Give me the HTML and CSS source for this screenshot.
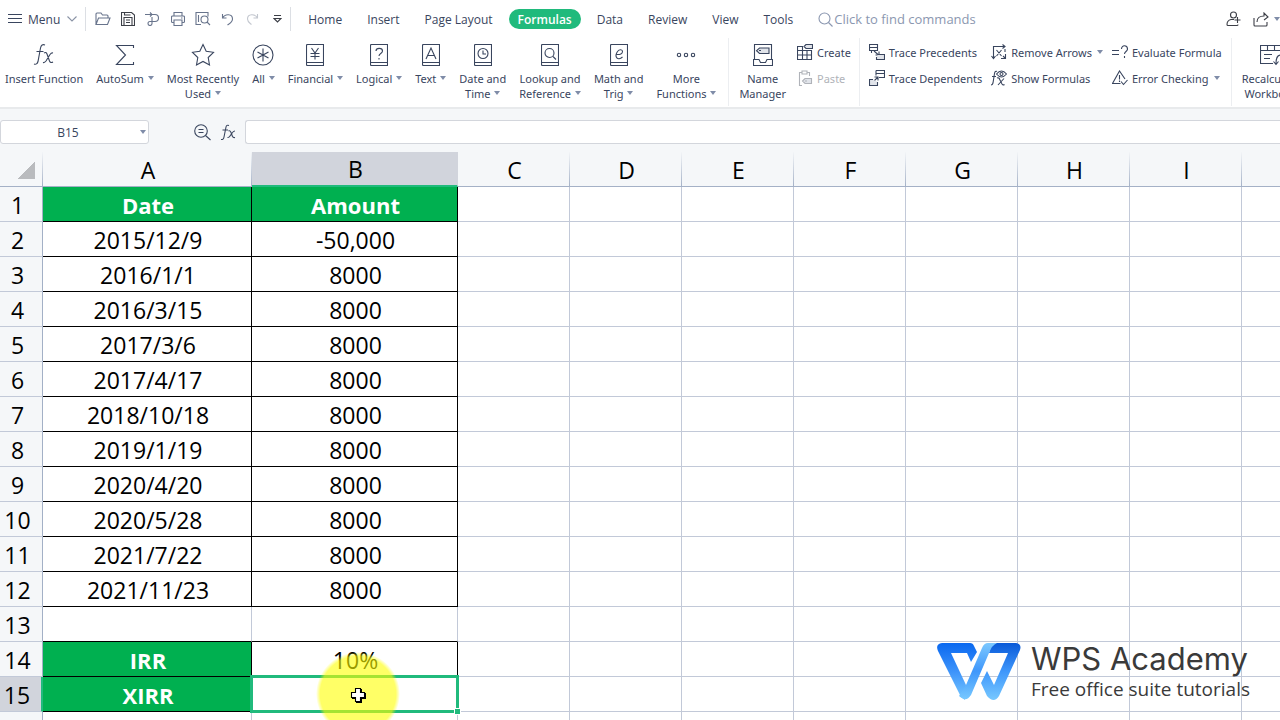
FILE: index.html
```html
<!DOCTYPE html>
<html lang="en">
<head>
    <meta charset="UTF-8" />
    <meta name="viewport" content="width=device-width, initial-scale=1" />
    <title>Spreadsheet</title>
    <link rel="stylesheet" href="styles.css">
</head>
<body>
<header>
    <div class="topbar">
        <button class="menu-btn">
            <svg width="14" height="10" viewBox="0 0 14 10"><path d="M0 .5h14M0 4.5h14M0 8.5h14"/></svg>
            Menu
            <svg class="soft" width="10" height="6" viewBox="0 0 10 6"><path d="M.5.5 5 5 9.5.5"/></svg>
        </button>
        <div class="quick">
            <button aria-label="Open"><svg width="16" height="14" viewBox="0 0 16 14"><path d="M1 12.500V2q0-1 1-1h4l1.500 2H12q1 0 1 1v1.500M1 12.500 3.500 6h11.500l-2.500 6.500z"/></svg></button>
            <button class="dark" aria-label="Save"><svg width="14" height="14" viewBox="0 0 14 14"><path d="M.5.5h10l3 2.500v10.500H.5zM3 13V5.500h8V13M3.500.5V3h6M5 8h4M5 10.500h4"/></svg></button>
            <button aria-label="Export"><svg width="15" height="14" viewBox="0 0 15 14"><path d="M3 2.500h7a3.500 3.500 0 0 1 0 7H5a2 2 0 1 0 2 2V5M0 2.500h5M5 .5l2 2-2 2"/></svg></button>
            <button aria-label="Print"><svg width="14" height="14" viewBox="0 0 14 14"><path d="M3 4V.5h8V4M3 10.500H1.500q-1 0-1-1V5q0-1 1-1h11q1 0 1 1v4.500q0 1-1 1H11M3 8h8v5.500H3zM10 6h1.500"/></svg></button>
            <button aria-label="Print preview"><svg width="16" height="14" viewBox="0 0 16 14"><path d="M6 12.500H1V.5h12v4M3.500 3v7"/><circle cx="9.500" cy="7.500" r="3.500"/><path d="m12 10 3 3"/></svg></button>
            <button aria-label="Undo"><svg width="13" height="14" viewBox="0 0 13 14"><path d="M1.500 2v4h4M1.500 6C4 1.500 11.500 1.500 11.500 7c0 3-2 4-5 6"/></svg></button>
            <button class="faint" aria-label="Redo"><svg width="13" height="14" viewBox="0 0 13 14"><path d="M11.500 2v4h-4M11.500 6C9 1.500 1.500 1.500 1.500 7c0 3 2 4 4 5.500"/></svg></button>
            <button class="dark" aria-label="Customize"><svg width="9" height="8" viewBox="0 0 9 8"><path d="M1 .5h7M1 3.500l3.500 3.500L8 3.500z"/></svg></button>
        </div>
        <nav class="tabs">
            <button>Home</button>
            <button>Insert</button>
            <button>Page Layout</button>
            <button class="active">Formulas</button>
            <button>Data</button>
            <button>Review</button>
            <button>View</button>
            <button>Tools</button>
        </nav>
        <label class="search">
            <svg width="15" height="15" viewBox="0 0 15 15"><circle cx="6.500" cy="6.500" r="5.500"/><path d="m10.500 10.500 4 4"/></svg>
            <input type="text" placeholder="Click to find commands" aria-label="Find commands">
        </label>
        <div class="account">
            <button class="dark" aria-label="Add user"><svg width="15" height="16" viewBox="0 0 15 16"><circle cx="7.500" cy="4" r="3"/><path d="M8 8.500H5q-4 1-4 5 0 1 1 1h9q1 0 1-1M11.500 6v6M8.500 9h6"/></svg></button>
            <button class="dark" aria-label="Share"><svg width="16" height="15" viewBox="0 0 16 15"><path d="M1 6v7q0 1 1 1h11q1 0 1-1v-3M4 10c0-4 3-6 7-6V1l4 4-4 3"/></svg><span class="caret"></span></button>
        </div>
    </div>

    <svg class="defs" width="0" height="0">
        <symbol id="book" viewBox="0 0 18 22"><path d="M1.500.5h16v21h-16q-1 0-1-1v-19q0-1 1-1zM.5 18.500h17"/></symbol>
    </svg>

    <div class="ribbon">
        <div class="group functions">
            <button class="big">
                <svg width="22" height="24" viewBox="0 0 22 24"><path d="M12 2q-3.500-1.500-4.500 3L5 18.500Q4 22 1 21M3.500 8.500h7M11 10q2-1.500 3 1l2.500 7q1 2.500 3.500 1M20 10q-1.500-.5-3 1.500L13 18q-1.500 2-3 1.500"/></svg>
                <span>Insert Function</span>
            </button>
            <button class="big">
                <svg width="20" height="24" viewBox="0 0 20 24"><path d="M18.500 5V2.500h-17l9 9.500-9 9.500h17V19"/></svg>
                <span>AutoSum <i class="caret"></i></span>
            </button>
            <button class="big">
                <svg width="24" height="24" viewBox="0 0 24 24"><path d="m12 1.500 3.200 6.800 7.300 1-5.300 5.200 1.300 7.500-6.500-3.600L5.500 22l1.300-7.500L1.500 9.300l7.300-1z"/></svg>
                <span>Most Recently<br>Used <i class="caret"></i></span>
            </button>
            <button class="big">
                <svg width="22" height="24" viewBox="0 0 22 24"><circle cx="11" cy="12" r="10"/><path d="M11 5.500v13M5.500 9l11 6M16.500 9l-11 6"/></svg>
                <span>All <i class="caret"></i></span>
            </button>
            <button class="big">
                <svg width="18" height="24" viewBox="0 0 18 24"><use href="#book" y="1" width="18" height="22"/><path d="m5.500 5 3.500 5 3.500-5M4.500 10.500h9M4.500 13.500h9M9 10v6.500"/></svg>
                <span>Financial <i class="caret"></i></span>
            </button>
            <button class="big">
                <svg width="18" height="24" viewBox="0 0 18 24"><use href="#book" y="1" width="18" height="22"/><path d="M6 8c0-3.500 6.500-3.500 6.500 0 0 2.500-3.500 2.500-3.500 5M9 15v1.500"/></svg>
                <span>Logical <i class="caret"></i></span>
            </button>
            <button class="big">
                <svg width="18" height="24" viewBox="0 0 18 24"><use href="#book" y="1" width="18" height="22"/><path d="M4 16 9 5l5 11M6 12.500h6"/></svg>
                <span>Text <i class="caret"></i></span>
            </button>
            <button class="big">
                <svg width="18" height="24" viewBox="0 0 18 24"><use href="#book" y="1" width="18" height="22"/><circle cx="9" cy="10.500" r="5"/><path d="M9 7.500v3.500h3"/></svg>
                <span>Date and<br>Time <i class="caret"></i></span>
            </button>
            <button class="big">
                <svg width="18" height="24" viewBox="0 0 18 24"><use href="#book" y="1" width="18" height="22"/><circle cx="8.500" cy="10" r="4.500"/><path d="m12 13.500 3 3"/></svg>
                <span>Lookup and<br>Reference <i class="caret"></i></span>
            </button>
            <button class="big">
                <svg width="18" height="24" viewBox="0 0 18 24"><use href="#book" y="1" width="18" height="22"/><path d="M6 11.500q6.500.5 6.500-3c0-2-3-2.500-5 0-3.500 5 0 10 5 5.500"/></svg>
                <span>Math and<br>Trig <i class="caret"></i></span>
            </button>
            <button class="big">
                <svg width="20" height="24" viewBox="0 0 20 24"><circle cx="3" cy="12" r="1.700"/><circle cx="10" cy="12" r="1.700"/><circle cx="17" cy="12" r="1.700"/></svg>
                <span>More<br>Functions <i class="caret"></i></span>
            </button>
        </div>

        <div class="group names">
            <button class="big">
                <svg width="20" height="24" viewBox="0 0 20 24"><path d="M1.500 16.500v-15h17v15M.5 16.500h5.500l1.500 3h5l1.500-3h5.500v6H.5z"/><path class="fill" d="M6.500 5h9.500v5.500H6.500L3.500 7.700z"/><path d="M6 7.500h2"/></svg>
                <span>Name<br>Manager</span>
            </button>
            <div class="stack">
                <button class="small">
                    <svg width="16" height="16" viewBox="0 0 16 16"><path d="M6 2.500H.5v13h14V6M.5 6.500h14M.5 11h14M5.500 2.500v13M10 6.500v9"/><path class="fill" d="M9 .5h6.500v4H9l-2-2z"/></svg>
                    Create
                </button>
                <button class="small" disabled>
                    <svg width="16" height="16" viewBox="0 0 16 16"><path d="M5 15.500H2.500V2.500H5M10 2.500h2.500V6M5 1h5v3H5z"/><path class="fill" d="M8 8.500h6.500v5H8L5.500 11z"/><path d="M8 11h2"/></svg>
                    Paste
                </button>
            </div>
        </div>

        <div class="group audit">
            <div class="stack">
                <button class="small">
                    <svg width="16" height="16" viewBox="0 0 16 16"><path d="M.5.5h8v6h-8zM.5 3.500h8M2.500 6.500V9M5 7l4.500 4M6.500 11H10V7.500"/><path class="fill" d="M9 10.500h6.500v5H7.500V13"/></svg>
                    Trace Precedents
                </button>
                <button class="small">
                    <svg width="16" height="16" viewBox="0 0 16 16"><path d="M7 .5h8.500v7H10M7 .5v5M7 3.500h8.500M4 12l5-5M5.500 7H9v3.500"/><path class="fill" d="M4 9.500H.5v6h8V12"/></svg>
                    Trace Dependents
                </button>
            </div>
            <div class="stack">
                <button class="small">
                    <svg width="16" height="16" viewBox="0 0 16 16"><path d="M2.500 14V2.500H14M11.500.5l2.500 2-2.500 2M.5 12l2 2.500 2-2.500M5.500 6l5 6M10.500 6l-5 6M14 5v3M10 14.500h4.500V10M12 12l2.500 2.500"/></svg>
                    Remove Arrows <i class="caret"></i>
                </button>
                <button class="small">
                    <svg width="16" height="16" viewBox="0 0 16 16"><path d="M6 1.500q-2-1-2.500 2L2 13q-.5 2-2 2M1 6.500h4M6 8q2-1 3 2l2 4q1 1.500 2.500.5M13 8.500 7 15M5.500 4q5-6 10 0-5 6-10 0z"/><circle cx="10.500" cy="4" r="1.500"/></svg>
                    Show Formulas
                </button>
            </div>
            <div class="stack">
                <button class="small">
                    <svg width="16" height="16" viewBox="0 0 16 16"><path d="M0 6.500h7M0 10.500h7M9.500 5c0-4.500 6-4 6 0 0 2.500-3 2.500-3 5M12.500 12v2"/></svg>
                    Evaluate Formula
                </button>
                <button class="small">
                    <svg width="16" height="16" viewBox="0 0 16 16"><path d="M8.500 13.500H.5L7.500 1l5.500 8M7.500 5v4.500M7.500 10.500V12M9 11.500l2.500 3 4-4.500"/></svg>
                    Error Checking <i class="caret"></i>
                </button>
            </div>
        </div>

        <div class="group calc">
            <button class="big">
                <svg width="22" height="24" viewBox="0 0 22 24"><path d="M13 20.500H.5v-18h21V10M.5 7.500h21M7.500 2.500v5M14.500 2.500v5M4 11.500h8M4 15.500h6M21 12c-4 0-5 3-5 9M13.500 18.500l2.500 3 2.500-3"/></svg>
                <span>Recalculate<br>Workbook</span>
            </button>
        </div>
    </div>
</header>

<div class="formula-bar">
    <div class="name-box">
        <input type="text" value="B15" aria-label="Name box">
        <i class="caret"></i>
    </div>
    <div class="formula-tools">
        <button aria-label="Zoom"><svg width="17" height="17" viewBox="0 0 17 17"><circle cx="7" cy="7" r="6.300"/><path d="m11.500 11.500 5 4.500M4.500 5.500h5M4.500 8.500h5"/></svg></button>
        <button aria-label="Insert function"><svg width="16" height="17" viewBox="0 0 16 17"><path d="M9 1.500Q6.500.5 6 3L4 13q-.5 3-3 2.500M2.500 6h5.500M8.500 7q1.500-1 2.500 1.500l1.500 4q.8 1.500 2.500 1M15 7q-1.500 0-2.500 1.500L10 12q-1 1.800-2.500 1.500"/></svg></button>
    </div>
    <input class="formula-input" type="text" aria-label="Formula">
</div>

<main>
    <table>
        <colgroup>
            <col class="col-head"><col class="col-a"><col class="col-b">
            <col><col><col><col><col><col><col><col>
        </colgroup>
        <thead>
            <tr>
                <th class="corner"></th><th>A</th><th class="current">B</th><th>C</th><th>D</th><th>E</th><th>F</th><th>G</th><th>H</th><th>I</th><th></th>
            </tr>
        </thead>
        <tbody>
            <tr><th>1</th><td class="data title">Date</td><td class="data title">Amount</td><td></td><td></td><td></td><td></td><td></td><td></td><td></td><td></td></tr>
            <tr><th>2</th><td class="data">2015/12/9</td><td class="data">-50,000</td><td></td><td></td><td></td><td></td><td></td><td></td><td></td><td></td></tr>
            <tr><th>3</th><td class="data">2016/1/1</td><td class="data">8000</td><td></td><td></td><td></td><td></td><td></td><td></td><td></td><td></td></tr>
            <tr><th>4</th><td class="data">2016/3/15</td><td class="data">8000</td><td></td><td></td><td></td><td></td><td></td><td></td><td></td><td></td></tr>
            <tr><th>5</th><td class="data">2017/3/6</td><td class="data">8000</td><td></td><td></td><td></td><td></td><td></td><td></td><td></td><td></td></tr>
            <tr><th>6</th><td class="data">2017/4/17</td><td class="data">8000</td><td></td><td></td><td></td><td></td><td></td><td></td><td></td><td></td></tr>
            <tr><th>7</th><td class="data">2018/10/18</td><td class="data">8000</td><td></td><td></td><td></td><td></td><td></td><td></td><td></td><td></td></tr>
            <tr><th>8</th><td class="data">2019/1/19</td><td class="data">8000</td><td></td><td></td><td></td><td></td><td></td><td></td><td></td><td></td></tr>
            <tr><th>9</th><td class="data">2020/4/20</td><td class="data">8000</td><td></td><td></td><td></td><td></td><td></td><td></td><td></td><td></td></tr>
            <tr><th>10</th><td class="data">2020/5/28</td><td class="data">8000</td><td></td><td></td><td></td><td></td><td></td><td></td><td></td><td></td></tr>
            <tr><th>11</th><td class="data">2021/7/22</td><td class="data">8000</td><td></td><td></td><td></td><td></td><td></td><td></td><td></td><td></td></tr>
            <tr><th>12</th><td class="data">2021/11/23</td><td class="data">8000</td><td></td><td></td><td></td><td></td><td></td><td></td><td></td><td></td></tr>
            <tr class="before-data"><th>13</th><td></td><td></td><td></td><td></td><td></td><td></td><td></td><td></td><td></td><td></td></tr>
            <tr><th>14</th><td class="data title">IRR</td><td class="data">10%</td><td></td><td></td><td></td><td></td><td></td><td></td><td></td><td></td></tr>
            <tr><th class="current">15</th><td class="data title">XIRR</td>
                <td class="data selected">
                    <span class="handle"></span>
                    <span class="spot"></span>
                    <svg class="pointer" width="16" height="16" viewBox="0 0 16 16"><path class="shadow" d="M6 2h6v4h4v6h-4v4H6v-4H2V6h4z"/><path class="cross" d="M5.500 1.500h5v4h4v5h-4v4h-5v-4h-4v-5h4z"/></svg>
                </td>
                <td></td><td></td><td></td><td></td><td></td><td></td><td></td><td></td></tr>
            <tr><th></th><td></td><td></td><td></td><td></td><td></td><td></td><td></td><td></td><td></td><td></td></tr>
        </tbody>
    </table>

    <div class="brand">
        <svg width="84" height="58" viewBox="0 0 84 58">
            <defs>
                <linearGradient id="left" x1="0" y1="0" x2="0" y2="1"><stop offset="0" stop-color="#0a68f0"/><stop offset=".5" stop-color="#3d93fa"/><stop offset="1" stop-color="#77c8ff"/></linearGradient>
                <linearGradient id="right" x1="0" y1="0" x2="0" y2="1"><stop offset="0" stop-color="#0959d8"/><stop offset=".5" stop-color="#3f97fb"/><stop offset="1" stop-color="#77c8ff"/></linearGradient>
                <linearGradient id="mid" x1="0" y1="0" x2="0" y2="1"><stop offset="0" stop-color="#7cc8ff"/><stop offset=".5" stop-color="#3f97fb"/><stop offset="1" stop-color="#77c8ff"/></linearGradient>
            </defs>
            <path class="right" d="M55 0h24q6 1 4 7L62 53q-5 8-12 0l-6-13 6-12 7 14 14-32H52z"/>
            <path class="left" d="M5 0h28q3 0 4 3l3 6-6 10-4-9H14l15 32-1 15q-3-1-5-5L1 8Q-2 1 5 0z"/>
            <path class="mid" d="M51 0h9q-5 2-8 10L34 52q-5 8-12 1l7-11L45 5q2-5 6-5z"/>
        </svg>
        <div>
            <div class="brand-name">WPS Academy</div>
            <div class="brand-line">Free office suite tutorials</div>
        </div>
    </div>
</main>
</body>
</html>
```

FILE: styles.css
```css
* {
    box-sizing: border-box;
}
body {
    margin: 0;
    height: 100vh;
    display: flex;
    flex-direction: column;
    overflow: hidden;
    font-family: "Open Sans", "Noto Sans", sans-serif;
    font-size: 12px;
    color: #39455e;
    background: #fff;
}
button,
input {
    font: inherit;
    color: inherit;
    border: none;
    background: none;
    padding: 0;
    outline: none;
}
button {
    display: flex;
    align-items: center;
    justify-content: center;
    flex-shrink: 0;
    white-space: nowrap;
    cursor: pointer;
}
svg {
    flex-shrink: 0;
    fill: none;
    stroke: currentColor;
    stroke-width: 1.1;
}
svg .fill {
    fill: #e1e4ea;
}
.defs {
    position: absolute;
}
.caret {
    display: inline-block;
    border: 3px solid transparent;
    border-top: 4px solid #7f8ca8;
    border-bottom: none;
    vertical-align: 3px;
}

/* Top bar */
.topbar {
    display: flex;
    align-items: center;
    height: 38px;
}
.menu-btn {
    gap: 6px;
    padding: 0 8px;
    height: 24px;
    border-right: 1px solid #dcdfe4;
}
.menu-btn .soft {
    margin-left: 1px;
    color: #8a93a5;
}
.quick {
    display: flex;
    height: 24px;
    padding-left: 4px;
    border-right: 1px solid #dcdfe4;
    color: #68748c;
}
.quick button {
    width: 25px;
}
.dark {
    color: #3c3f47;
}
.quick .faint {
    color: #c3c7cf;
}
.tabs {
    display: flex;
    gap: 7px;
    padding-left: 8px;
}
.tabs button {
    height: 20px;
    padding: 0 9px;
    border-radius: 10px;
}
.tabs .active {
    background: #20ba7c;
    color: #fff;
    font-weight: 600;
}
.search {
    display: flex;
    align-items: center;
    flex: 1;
    padding-left: 16px;
    gap: 1px;
    font-size: 13px;
    color: #8b97b0;
}
.search input {
    flex: 1;
    min-width: 0;
}
.search input::placeholder {
    color: #8b97b0;
    opacity: 1;
}
.account {
    display: flex;
    gap: 12px;
}
.account button {
    gap: 5px;
}

/* Ribbon */
.ribbon {
    display: flex;
    height: 71px;
    border-bottom: 2px solid #e8eaec;
    font-family: "Noto Sans", sans-serif;
    font-size: 11px;
    overflow: hidden;
}
.ribbon .caret {
    margin-left: 1px;
}
.group {
    display: flex;
    flex-shrink: 0;
    height: 68px;
    border-right: 1px solid #eceef1;
}
.functions {
    gap: 13px;
    padding: 0 12px 0 5px;
}
.names {
    gap: 11px;
    padding: 0 8px 0 10px;
}
.audit {
    gap: 9px;
    padding: 0 9px;
}
.calc {
    padding-left: 10px;
    border-right: none;
}
.big {
    flex-direction: column;
    justify-content: flex-start;
    gap: 4px;
    padding-top: 5px;
    line-height: 15px;
}
.stack {
    display: flex;
    flex-direction: column;
    align-items: flex-start;
    padding-top: 1px;
}
.small {
    height: 26px;
    gap: 4px;
}
.small:disabled {
    color: #b0b3b9;
}

/* Name box and formula */
.formula-bar {
    display: flex;
    align-items: flex-start;
    height: 43px;
    padding-top: 11px;
    background: #f5f7f9;
}
.name-box {
    display: flex;
    align-items: center;
    width: 149px;
    height: 24px;
    padding-right: 2px;
    border: 1px solid #d3d6dc;
    border-radius: 3px;
    background: #fff;
}
.name-box input {
    flex: 1;
    min-width: 0;
    padding-right: 5px;
    text-align: center;
}
.formula-tools {
    display: flex;
    align-items: center;
    gap: 9px;
    height: 24px;
    padding: 0 9px 0 45px;
}
.formula-input {
    flex: 1;
    height: 24px;
    border: 1px solid #d3d6dc;
    border-right: none;
    border-radius: 3px 0 0 3px;
    background: #fff;
}

/* Sheet */
main {
    flex: 1;
    position: relative;
    overflow: hidden;
}
table {
    table-layout: fixed;
    width: 1354px;
    border-collapse: separate;
    border-spacing: 0;
    font-size: 23px;
    line-height: 31px;
    color: #000;
}
.col-head {
    width: 43px;
}
.col-a {
    width: 209px;
}
.col-b {
    width: 206px;
}
th,
td {
    height: 35px;
    padding: 2px 0 0 2px;
    text-align: center;
    border-right: 1px solid #c2c9d8;
    border-bottom: 1px solid #c2c9d8;
}
th {
    font-weight: 400;
    background: #f5f7f9;
}
thead th {
    border-bottom-color: #a3b0c6;
    border-right: 1px solid;
    border-image: linear-gradient(#f5f7f9, #a3b0c6) 1;
}
tbody th {
    padding-right: 9px;
    border-right-color: #a3b0c6;
    border-bottom-color: #c2c9d8;
}
thead .current {
    background: #d1d4dc;
    border-image: none;
    border-right-color: #d1d4dc;
    border-bottom: 2px solid #20ba7c;
}
tbody .current {
    background: #d1d4dc;
    border-right: 2px solid #20ba7c;
}
.corner {
    background: linear-gradient(135deg, transparent 50%, #b9bbbe 50%) 17px 9px / 18px 18px no-repeat #f5f7f9;
}
.data {
    border-color: #000;
}
.title {
    background: #00b050;
    color: #fff;
    font-size: 22px;
    font-weight: 700;
}
.before-data td:nth-child(-n+3) {
    border-bottom-color: #000;
}
.selected {
    position: relative;
}
.selected::after {
    content: "";
    position: absolute;
    inset: -2px;
    border: 3px solid #20ba7c;
}
.handle {
    position: absolute;
    z-index: 1;
    right: -4px;
    bottom: -4px;
    width: 7px;
    height: 7px;
    border: 1px solid #fff;
    background: #20ba7c;
}
.spot {
    position: absolute;
    z-index: 2;
    left: 64px;
    top: -25px;
    width: 84px;
    height: 84px;
    border-radius: 50%;
    background: radial-gradient(circle closest-side, rgba(255,255,0,0.6) 90%, rgba(255,255,0,0));
}
.pointer {
    position: absolute;
    z-index: 3;
    left: 98px;
    top: 10px;
}
.pointer .shadow {
    fill: #000;
    stroke: none;
}
.pointer .cross {
    fill: #fff;
    stroke: #000;
}

/* Watermark */
.brand {
    position: absolute;
    z-index: 4;
    right: 30px;
    bottom: 18px;
    display: flex;
    align-items: center;
    gap: 10px;
    color: #3a3a3a;
}
.brand svg {
    stroke: none;
}
.brand .left {
    fill: url(#left);
}
.brand .right {
    fill: url(#right);
}
.brand .mid {
    fill: url(#mid);
}
.brand-name {
    font-family: Inter, sans-serif;
    font-size: 31px;
    line-height: 34px;
}
.brand-line {
    font-size: 19px;
    line-height: 26px;
}
```
